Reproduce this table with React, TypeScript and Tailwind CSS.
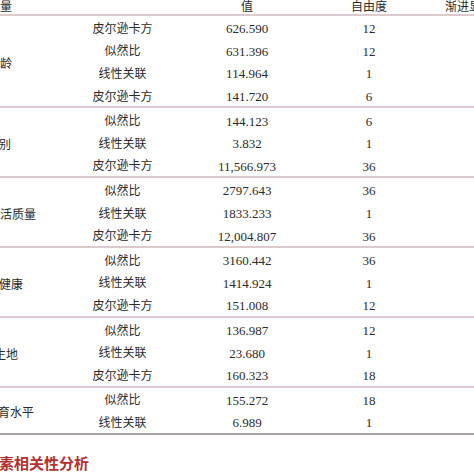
import React from "react";

type Row = { m: string; v: string; d: string };
type Group = { label: string; off: string; rows: Row[] };

const groups: Group[] = [
  {
    label: "年龄",
    off: "ml-[-12px]",
    rows: [
      { m: "皮尔逊卡方", v: "626.590", d: "12" },
      { m: "似然比", v: "631.396", d: "12" },
      { m: "线性关联", v: "114.964", d: "1" },
      { m: "皮尔逊卡方", v: "141.720", d: "6" },
    ],
  },
  {
    label: "性别",
    off: "ml-[-13px]",
    rows: [
      { m: "似然比", v: "144.123", d: "6" },
      { m: "线性关联", v: "3.832", d: "1" },
      { m: "皮尔逊卡方", v: "11,566.973", d: "36" },
    ],
  },
  {
    label: "生活质量",
    off: "ml-[-12px]",
    rows: [
      { m: "似然比", v: "2797.643", d: "36" },
      { m: "线性关联", v: "1833.233", d: "1" },
      { m: "皮尔逊卡方", v: "12,004.807", d: "36" },
    ],
  },
  {
    label: "身体健康",
    off: "ml-[-25px]",
    rows: [
      { m: "似然比", v: "3160.442", d: "36" },
      { m: "线性关联", v: "1414.924", d: "1" },
      { m: "皮尔逊卡方", v: "151.008", d: "12" },
    ],
  },
  {
    label: "出生地",
    off: "ml-[-18px]",
    rows: [
      { m: "似然比", v: "136.987", d: "12" },
      { m: "线性关联", v: "23.680", d: "1" },
      { m: "皮尔逊卡方", v: "160.323", d: "18" },
    ],
  },
  {
    label: "教育水平",
    off: "ml-[-14px]",
    rows: [
      { m: "似然比", v: "155.272", d: "18" },
      { m: "线性关联", v: "6.989", d: "1" },
    ],
  },
];

export default function App() {
  return (
    <div className="w-[474px] h-[474px] overflow-hidden bg-white text-[#2b2b2b] [font-family:'Liberation_Serif','Noto_Sans_CJK_SC',serif]">
      <div className="w-[530px]">
        {/* header */}
        <div className="h-[16px] border-b-2 border-[#dccacd] grid grid-cols-[62px_121px_128px_116px_96px] items-center text-[12px] leading-none">
          <div className="whitespace-nowrap">
            <span className="ml-[-12px]">变量</span>
          </div>
          <div />
          <div className="text-center">值</div>
          <div className="text-center">自由度</div>
          <div className="text-center whitespace-nowrap">渐进显著性</div>
        </div>

        {groups.map((g, gi) => (
          <div
            key={gi}
            className={
              gi === groups.length - 1
                ? "flex border-b-2 border-[#aaa3a4]"
                : "flex border-b-2 border-[#dccacd]"
            }
          >
            <div className="w-[62px] shrink-0 flex items-center pt-[6px] whitespace-nowrap text-[12px] leading-none">
              <span className={g.off}>{g.label}</span>
            </div>
            <div className="flex-1 flex flex-col">
              {g.rows.map((r, ri) => (
                <div
                  key={ri}
                  className="h-[22.6px] pt-[3px] grid grid-cols-[121px_128px_116px_96px] items-center leading-none"
                >
                  <div className="text-center text-[12px]">{r.m}</div>
                  <div className="text-center text-[13px]">{r.v}</div>
                  <div className="text-center text-[13px]">{r.d}</div>
                  <div />
                </div>
              ))}
            </div>
          </div>
        ))}

        <div className="mt-[17px] whitespace-nowrap text-[15px] font-bold leading-[22px] text-[#b5302f] [font-family:'Noto_Sans_CJK_SC',sans-serif]">
          <span className="ml-[-16px]">因素相关性分析</span>
        </div>
      </div>
    </div>
  );
}
